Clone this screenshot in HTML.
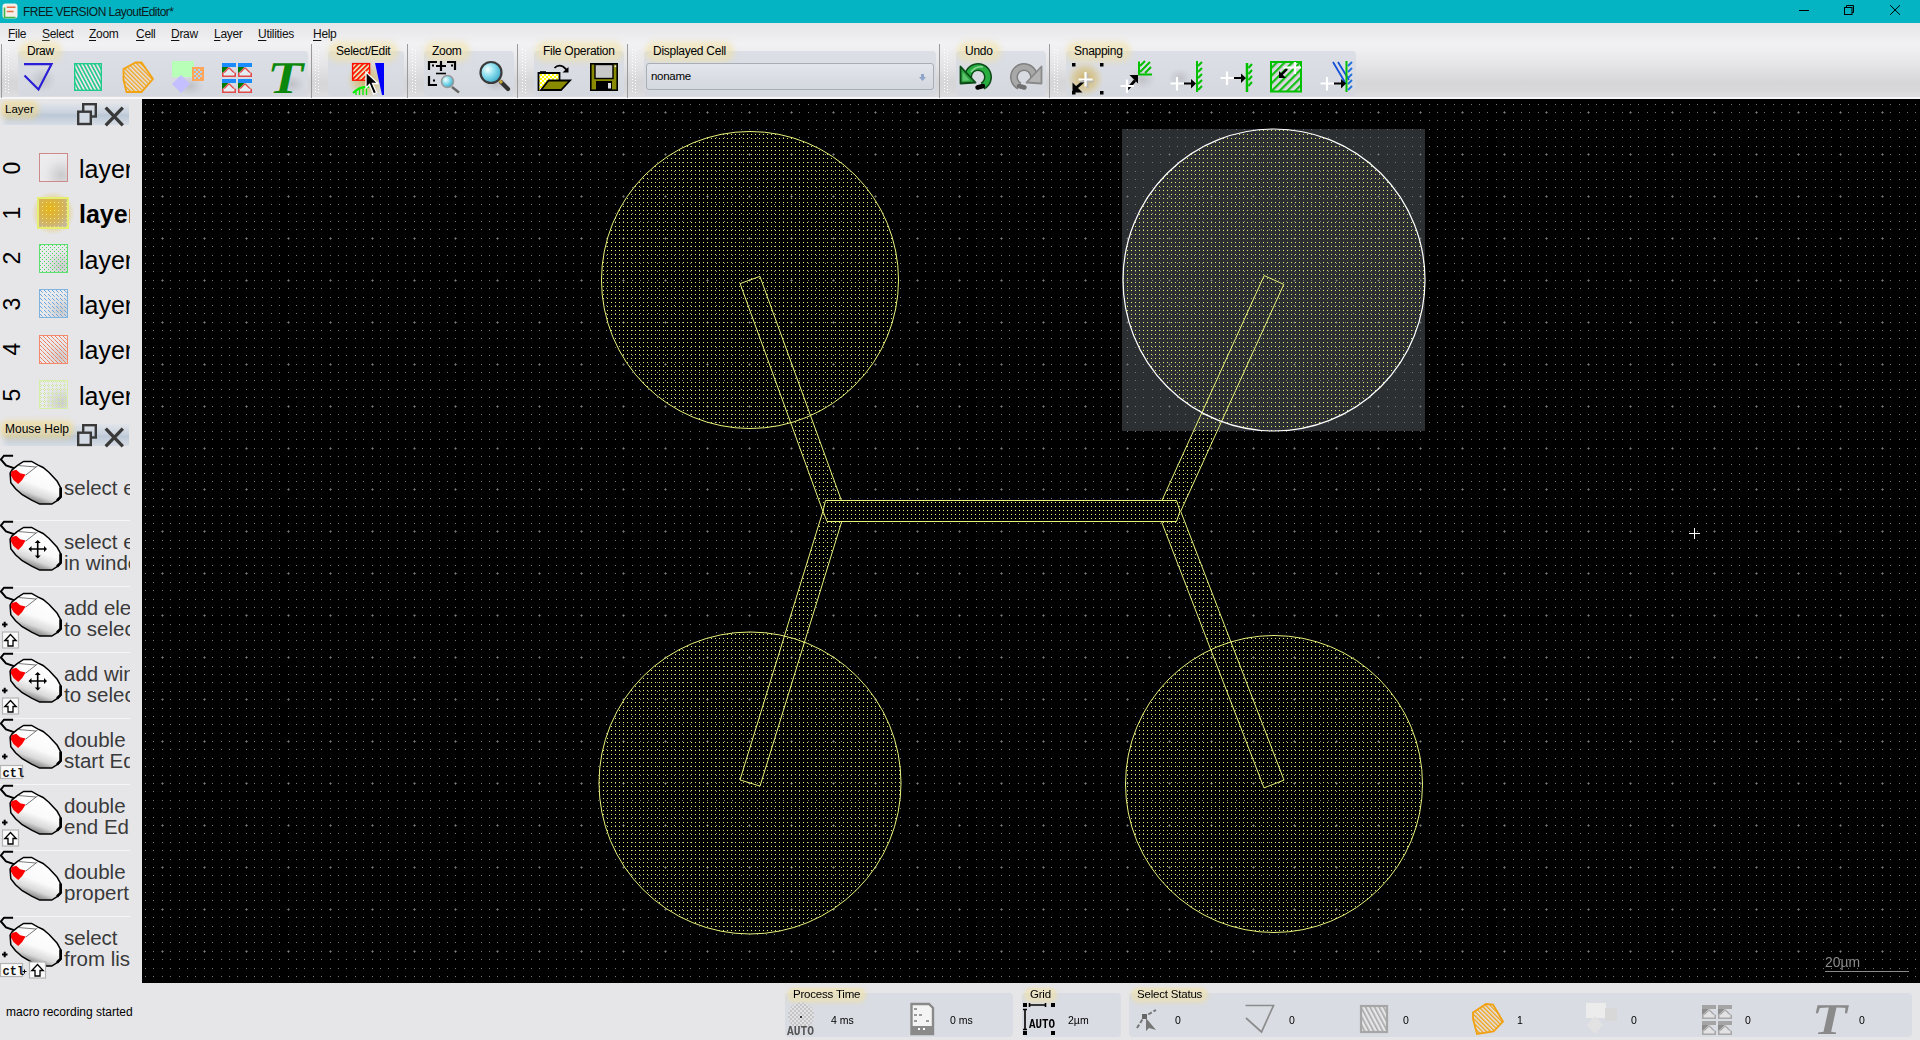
<!DOCTYPE html>
<html><head><meta charset="utf-8">
<style>
*{margin:0;padding:0;box-sizing:border-box}
html,body{width:1920px;height:1040px;overflow:hidden;background:#e6e6e9;font-family:"Liberation Sans",sans-serif;color:#000}
.a{position:absolute}
#title{left:0;top:0;width:1920px;height:23px;background:#04b4c3}
#title .t{left:23px;top:5px;font-size:12px;letter-spacing:-0.55px;color:#0b1a1c;white-space:nowrap}
#menu{left:0;top:23px;width:1920px;height:21px;background:linear-gradient(#e6e6e8,#eaeaec 40%,#f2f2f4 100%)}
#menu u{text-decoration:underline;text-underline-offset:2px;text-decoration-thickness:1px}
#menu span{position:absolute;top:4px;font-size:12px;letter-spacing:-0.3px;color:#111}
#tb{left:0;top:44px;width:1920px;height:54px;background:linear-gradient(#f2f2f4 0%,#ebebed 22%,#e3e3e5 45%,#d6d6d8 70%,#d8d8da 85%,#dfdfe1 100%)}
#tbline{left:0;top:97px;width:1920px;height:2px;background:#f6f6f8}
.grp{position:absolute;top:51px;height:45px;background:linear-gradient(#dcdfe5,#d5d8de);border-radius:4px}
.glab{position:absolute;top:43.9px;font-size:12px;letter-spacing:-0.27px;white-space:nowrap;color:#000;padding:0 5px 1px 5px;margin-left:-5px;line-height:14px;background:rgba(244,226,160,.5);border-radius:7px;box-shadow:0 0 5px 3px rgba(244,226,160,.5)}
.sep{position:absolute;top:44px;width:1px;height:54px;background:#9a9a9c}
.grip{position:absolute;top:49px;width:4px;height:45px;background-image:repeating-linear-gradient(#ffffff 0 1px,transparent 1px 3px),repeating-linear-gradient(#ffffff 0 1px,transparent 1px 3px);background-size:1px 100%,1px 100%;background-position:0 0,3px 1px;background-repeat:no-repeat}
#canvas{left:142px;top:99px;width:1778px;height:884px;background:radial-gradient(circle,#7a7a7a 0 0.7px,transparent 0.9px) 16.1px 9.3px/8.39px 8.388px,#000;overflow:hidden}
#left{left:0;top:99px;width:142px;height:884px;background:#e6e6e9}
#status{left:0;top:983px;width:1920px;height:57px;background:#e6e6e9}
.sgrp{position:absolute;top:993px;height:44px;background:#d9dce3;border-radius:4px}
.slab{position:absolute;top:987.8px;font-size:11.5px;letter-spacing:-0.2px;white-space:nowrap;color:#000;padding:0 5px 0 5px;margin-left:-5px;line-height:13px;background:rgba(244,226,160,.5);border-radius:6px;box-shadow:0 1px 4px 1px rgba(244,226,160,.5)}
.snum{position:absolute;top:1014.2px;font-size:10.5px;color:#000}

.dockt{background:linear-gradient(90deg,rgba(230,230,233,1) 0,rgba(230,230,233,0) 8px),linear-gradient(#e2e5ea 0%,#c9d2de 45%,#bcc8d7 55%,#d6dce4 100%)}
.docklab{font-size:11.5px;white-space:nowrap;padding:0 3px 1px 3px;margin-left:-3px;line-height:14px;background:rgba(244,214,120,.45);border-radius:6px;box-shadow:0 0 5px 2px rgba(244,214,120,.45)}
.lnum{position:absolute;left:0;width:24px;height:24px;font-size:23px;line-height:24px;text-align:center;transform:rotate(-90deg)}
.sw{position:absolute;left:39px;width:29px;height:29px;border:1px solid #c77;background:radial-gradient(circle at 75% 75%,#cdcdd0,#e9e9eb 70%)}
.ltxt{position:absolute;left:79px;width:51px;overflow:hidden;font-size:25px;line-height:30px;white-space:nowrap}
.mtxt{position:absolute;left:64px;width:66px;overflow:hidden;font-size:20.5px;line-height:21px;white-space:nowrap;color:#3a3a3a}
.msep{position:absolute;left:0;width:130px;height:1px;background:#f6f6f7}
</style></head><body>
<svg width="0" height="0" style="position:absolute">
 <defs>
  <linearGradient id="mshade" x1="0.7" y1="0.15" x2="0.35" y2="0.95"><stop offset="0" stop-color="#fff"/><stop offset="0.5" stop-color="#fafafa"/><stop offset="0.75" stop-color="#d8d8d8"/><stop offset="0.92" stop-color="#8a8a8a"/><stop offset="1" stop-color="#666"/></linearGradient>
  <radialGradient id="sgbase" cx=".78" cy=".78" r=".8"><stop offset="0" stop-color="#cacacd"/><stop offset=".7" stop-color="#e8e8ea"/><stop offset="1" stop-color="#ececee"/></radialGradient>
  <radialGradient id="sg1" cx=".4" cy=".35" r=".75"><stop offset="0" stop-color="#e8b418"/><stop offset=".6" stop-color="#d4b25a"/><stop offset="1" stop-color="#c4b8a0"/></radialGradient>
  <pattern id="sd1" patternUnits="userSpaceOnUse" width="4" height="4"><rect x="1" y="1" width="1" height="1" fill="#f4f06a"/></pattern>
  <pattern id="sd2" patternUnits="userSpaceOnUse" width="4" height="4"><rect x="1" y="1" width="1" height="1" fill="#4ed862"/><rect x="3" y="3" width="1" height="1" fill="#4ed862"/></pattern>
  <pattern id="sd3" patternUnits="userSpaceOnUse" width="4" height="4"><rect x="1" y="1" width="1" height="1" fill="#6aa6dc"/><rect x="2" y="2" width="1" height="1" fill="#6aa6dc"/><rect x="3" y="3" width="1" height="1" fill="#8abce6"/></pattern>
  <pattern id="sd4" patternUnits="userSpaceOnUse" width="4" height="4"><rect x="0" y="1" width="1" height="1" fill="#f08060"/><rect x="1" y="2" width="1" height="1" fill="#f08060"/><rect x="2" y="3" width="1" height="1" fill="#f08060"/><rect x="3" y="0" width="1" height="1" fill="#f4a088"/></pattern>
  <pattern id="sd5" patternUnits="userSpaceOnUse" width="4" height="4"><rect x="1" y="0" width="1" height="1" fill="#cfe8a0"/><rect x="0" y="1" width="1" height="1" fill="#cfe8a0"/><rect x="2" y="1" width="1" height="1" fill="#cfe8a0"/><rect x="1" y="2" width="1" height="1" fill="#cfe8a0"/></pattern>
  <g id="mouse">
   <path d="M13.1 1.7H4L0.9 5.4L6 11.4L15.5 14.6" fill="none" stroke="#000" stroke-width="2"/>
   <path d="M17.5 11.4L23.6 7.4H31.6L37.7 10.8L43.1 13.5L49.1 18.5L57.2 27.3L61.2 34.7V42.7L57.9 46.1L51.8 50.1H39.7L31.6 46.1L22.2 40.7L15.5 34.7L10.8 28.6L10.1 19.2L12.1 15.8Z" fill="url(#mshade)" stroke="#000" stroke-width="1.5"/>
   <path d="M60.5 33.5V43L57 46.5" fill="none" stroke="#000" stroke-width="2.5"/>
   <path d="M11.4 17.2L16.2 15.8L20.2 19.2L25.6 20.5L22.2 25.9L18.2 30L13.5 25.9L10.8 21.2Z" fill="#f00"/>
   <path d="M18 11.5L36 13M25.6 21.2L37.7 11.8" fill="none" stroke="#555" stroke-width="0.8"/>
  </g>
  <g id="plus"><path d="M2 38.5H7.5M4.7 35.8V41.2" stroke="#000" stroke-width="2"/></g>
  <g id="mcross">
   <path d="M29.5 29H46M37.7 21V37.5" stroke="#000" stroke-width="1.6"/>
   <path d="M28.5 29L31.5 26V32ZM47 29L44 26V32ZM37.7 20L34.7 23H40.7ZM37.7 38.5L34.7 35.5H40.7Z" fill="#000"/>
  </g>
  <g id="kshift">
   <rect x="2.5" y="46" width="16" height="16" fill="#fafafa" stroke="#b4b4b4" stroke-width="1.2"/>
   <path d="M10.5 48.5L4.8 54.5H8V60H13V54.5H16.2Z" fill="#fff" stroke="#000" stroke-width="1.3"/>
  </g>
  <g id="kctl">
   <rect x="0.5" y="47.5" width="22" height="13" fill="#fafafa" stroke="#b4b4b4" stroke-width="1.2"/>
   <text x="2.5" y="58.5" font-family="Liberation Mono" font-size="12" font-weight="bold" fill="#111">ctl</text>
  </g>
 </defs>
</svg>

<div id="title" class="a">
 <svg class="a" style="left:2px;top:3px" width="16" height="16" viewBox="0 0 16 16"><rect x="0.5" y="0.5" width="15" height="15" rx="3" fill="#f4efe9"/><path d="M2.5 4.5V14.5H13.5" stroke="#43b649" stroke-width="1.6" fill="none"/><path d="M4.8 4.2H13.5M4.8 8.5H11.5" stroke="#e96d45" stroke-width="1.6"/></svg>
 <div class="a t">FREE VERSION LayoutEditor*</div>
 <svg class="a" style="left:1790px;top:0" width="130" height="22">
  <path d="M9 10.5H19" stroke="#000" stroke-width="1"/>
  <rect x="54.5" y="7.5" width="7.5" height="7" fill="none" stroke="#000"/><path d="M56.5 7.5V5.5H63.5V12.5H62" fill="none" stroke="#000"/>
  <path d="M100.2 5.2L110 14.8M110 5.2L100.2 14.8" stroke="#000" stroke-width="1"/>
 </svg>
</div>
<div id="menu" class="a">
 <span style="left:8px"><u>F</u>ile</span><span style="left:42px"><u>S</u>elect</span><span style="left:89px"><u>Z</u>oom</span><span style="left:136px"><u>C</u>ell</span><span style="left:171px"><u>D</u>raw</span><span style="left:214px"><u>L</u>ayer</span><span style="left:258px"><u>U</u>tilities</span><span style="left:313px"><u>H</u>elp</span>
</div>
<div id="tb" class="a"></div>
<div id="tbline" class="a"></div>
<!-- toolbar groups -->
<div class="sep" style="left:1px"></div><div class="grip" style="left:5px"></div>
<div class="grp" style="left:18px;width:290px"></div><div class="glab" style="left:27px">Draw</div>
<div class="sep" style="left:311px"></div><div class="grip" style="left:315px"></div>
<div class="grp" style="left:328px;width:76px"></div><div class="glab" style="left:336px">Select/Edit</div>
<div class="sep" style="left:407px"></div><div class="grip" style="left:412px"></div>
<div class="grp" style="left:424px;width:90px"></div><div class="glab" style="left:432px">Zoom</div>
<div class="sep" style="left:517px"></div><div class="grip" style="left:522px"></div>
<div class="grp" style="left:534px;width:90px"></div><div class="glab" style="left:543px">File Operation</div>
<div class="sep" style="left:627px"></div><div class="grip" style="left:632px"></div>
<div class="grp" style="left:644px;width:292px"></div><div class="glab" style="left:653px">Displayed Cell</div>
<div class="sep" style="left:939px"></div><div class="grip" style="left:944px"></div>
<div class="grp" style="left:956px;width:90px"></div><div class="glab" style="left:965px">Undo</div>
<div class="sep" style="left:1049px"></div><div class="grip" style="left:1054px"></div>
<div class="grp" style="left:1066px;width:290px"></div><div class="glab" style="left:1074px">Snapping</div>

<svg class="a" style="left:0;top:0" width="1920" height="99" id="tbicons">
 <defs>
  <pattern id="hatchG" patternUnits="userSpaceOnUse" width="3.3" height="4" patternTransform="rotate(-28)"><rect width="4" height="4" fill="#f4e2ec"/><rect width="1.6" height="4" fill="#1fcc8c"/></pattern>
  <pattern id="hatchO" patternUnits="userSpaceOnUse" width="3" height="4" patternTransform="rotate(-45)"><rect width="4" height="4" fill="#e2e4ee"/><rect width="1.4" height="4" fill="#f1a216"/></pattern>
  <pattern id="hatchR" patternUnits="userSpaceOnUse" width="3.5" height="4" patternTransform="rotate(45)"><rect width="4" height="4" fill="#e6e2b8"/><rect width="1.8" height="4" fill="#ff1a00"/></pattern>
  <pattern id="hatchS" patternUnits="userSpaceOnUse" width="5.5" height="6" patternTransform="rotate(45)"><rect width="6" height="6" fill="#dcd6e0"/><rect width="2.2" height="6" fill="#10c010"/></pattern>
  <pattern id="checkY" patternUnits="userSpaceOnUse" width="4" height="4"><rect width="4" height="4" fill="#ffff00"/><rect width="2" height="2" fill="#fff"/><rect x="2" y="2" width="2" height="2" fill="#fff"/></pattern>
  <radialGradient id="glowG"><stop offset="0" stop-color="#c9a84a" stop-opacity=".85"/><stop offset=".6" stop-color="#d8c07a" stop-opacity=".55"/><stop offset="1" stop-color="#e0d0a0" stop-opacity="0"/></radialGradient>
  <radialGradient id="shadowG"><stop offset="0" stop-color="#8a8a90" stop-opacity=".32"/><stop offset="1" stop-color="#9a9aa0" stop-opacity="0"/></radialGradient>
  <radialGradient id="glassG" cx=".35" cy=".35" r=".7"><stop offset="0" stop-color="#f4ffff"/><stop offset=".45" stop-color="#8fe0f0"/><stop offset="1" stop-color="#3aa8c8"/></radialGradient>
  <g id="arr1"><rect x="0" y="0" width="14" height="4" fill="#1a8cff"/><path d="M0 4H6.5L0 10.5Z" fill="#007a00"/><path d="M7 4.8L12.8 10.5H1.2Z" fill="#e4eef2"/><path d="M7 4.8L1.5 10.3M7 4.8L12.5 10.3" stroke="#e34a4a" stroke-width="1.3" fill="none"/><path d="M0.8 9.8V13.2H13.2V9.8" stroke="#e34a4a" stroke-width="1.6" fill="#e4eef2"/></g>
 </defs>
 <!-- Draw group -->
 <ellipse cx="42" cy="80" rx="14" ry="13" fill="url(#shadowG)"/>
 <path d="M24 64.2H51.5L38.5 89.5L24.5 75.5" fill="none" stroke="#2a1ed6" stroke-width="2.2"/>
 <rect x="74.7" y="63.7" width="26.6" height="26.6" fill="url(#hatchG)" stroke="#1fcc8c" stroke-width="1.4"/>
 <polygon points="123.5,69 135.5,62.5 141.5,62.5 153,79 141.5,92 126.5,92 123.5,80" fill="url(#hatchO)" stroke="#f2a312" stroke-width="1.8"/>
 <ellipse cx="190" cy="86" rx="14" ry="10" fill="url(#shadowG)"/>
 <rect x="172" y="61" width="22" height="16" fill="#b8ffb8"/>
 <polygon points="181,75 190,84 181,93 172,84" fill="#c4c0ff"/>
 <rect x="192" y="67" width="12" height="14" fill="#ffa65a"/>
 <path d="M194 70h2M198 70h2M196 72h2M200 72h2M194 74h2M198 74h2M196 76h2M200 76h2M194 78h2M198 78h2" stroke="#b0d4f0" stroke-width="2"/>
 <use href="#arr1" x="222" y="63"/><use href="#arr1" x="238" y="63"/><use href="#arr1" x="222" y="79"/><use href="#arr1" x="238" y="79"/>
 <ellipse cx="292" cy="84" rx="13" ry="10" fill="url(#shadowG)"/>
 <text x="0" y="0" transform="translate(266,93) scale(1.1,1) skewX(-11)" font-family="Liberation Serif" font-weight="bold" font-size="45.5" fill="#0b880b">T</text>
 <!-- Select/Edit -->
 <ellipse cx="366" cy="80" rx="20" ry="19" fill="url(#glowG)"/>
 <rect x="352.6" y="63.6" width="17" height="16.6" fill="url(#hatchR)" stroke="#ff1000" stroke-width="1.4"/>
 <polygon points="375,63 384,63 384,95 382,95" fill="#0000ff"/>
 <path d="M353 93Q360 86 369 87" fill="none" stroke="#00f000" stroke-width="2"/>
 <path d="M356 90V95M359.5 88.5V95M363 87.5V95M366.5 87.5V95" stroke="#00f000" stroke-width="1.3"/>
 <path d="M366 72V88L369.5 84.5L373.5 94L376.5 92.5L372.5 83.5H378Z" fill="#000" stroke="#fff" stroke-width="1.3"/>
 <!-- Zoom -->
 <path d="M429 70V62H437M455 70V62H447M429 76V85H437" fill="none" stroke="#000" stroke-width="2.2"/>
 <path d="M432 65.5h2M451 65.5h2M433 80.5h2" stroke="#000" stroke-width="2"/>
 <path d="M436 66H446M441 61V71" stroke="#000" stroke-width="2.2"/>
 <path d="M436 73.5H446" stroke="#000" stroke-width="1.6"/>
 <line x1="452" y1="87" x2="459" y2="92.5" stroke="#666" stroke-width="2.4"/>
 <circle cx="447.5" cy="81.5" r="6" fill="url(#glassG)" stroke="#9a9a9a" stroke-width="1.6"/>
 <ellipse cx="496" cy="84" rx="13" ry="8" fill="url(#shadowG)"/>
 <line x1="501" y1="82" x2="508" y2="89" stroke="#333" stroke-width="4.2" stroke-linecap="round"/>
 <line x1="499.5" y1="80.5" x2="502" y2="83" stroke="#c8a838" stroke-width="3"/>
 <circle cx="491" cy="72.5" r="10.5" fill="url(#glassG)" stroke="#3a3a3a" stroke-width="2.2"/>
 <!-- File op -->
 <path d="M540 72H546" stroke="#000" stroke-width="1.6"/>
 <path d="M538.5 91V73H559.5V80" fill="url(#checkY)" stroke="#000" stroke-width="1.8"/>
 <polygon points="541,90 548.5,80.5 570,80.5 561,90" fill="#8a8a00" stroke="#000" stroke-width="1.8"/>
 <path d="M554.5 68Q558 64 563 66.5L567.5 70.5" fill="none" stroke="#000" stroke-width="1.7"/>
 <path d="M562.5 72.5H568.5V67Z" fill="#000"/>
 <rect x="590.8" y="63.8" width="26.4" height="26.4" fill="#8a8a00" stroke="#000" stroke-width="1.6"/>
 <rect x="595" y="64.5" width="18" height="14" fill="#c8c8c8" stroke="#000" stroke-width="1.4"/>
 <rect x="596" y="81" width="16" height="9" fill="#000"/>
 <rect x="608" y="83" width="3" height="5.5" fill="#ddd"/>
 <rect x="614.5" y="65.5" width="1.6" height="1.6" fill="#eee"/>
 <!-- Undo/Redo -->
 <path d="M968.3 79.5A10 10 0 1 1 982.5 86" fill="none" stroke="#0d4d1a" stroke-width="8"/>
 <path d="M968.3 79.5A10 10 0 1 1 982.5 86" fill="none" stroke="#27ad40" stroke-width="5"/>
 <path d="M971 72Q976 66 983 67" fill="none" stroke="#8fd89a" stroke-width="1.5"/>
 <polygon points="960.5,66.5 960.5,83.5 975.5,82.5" fill="#2a9e3c" stroke="#0b4a17" stroke-width="1.8" stroke-linejoin="round"/>
 <path d="M962.5 72L962.5 81L970 80.5Z" fill="#5cc46c"/>
 <path d="M977.5 87.5L983 86" stroke="#000" stroke-width="4.5" stroke-linecap="round"/>
 <path d="M1033.7 79.5A10 10 0 1 0 1019.5 86" fill="none" stroke="#808080" stroke-width="8"/>
 <path d="M1033.7 79.5A10 10 0 1 0 1019.5 86" fill="none" stroke="#a8a8a8" stroke-width="5"/>
 <polygon points="1041.5,66.5 1041.5,83.5 1026.5,82.5" fill="#b4b4b4" stroke="#8a8a8a" stroke-width="1.8" stroke-linejoin="round"/>
 <path d="M1024.5 87.5L1019 86" stroke="#707070" stroke-width="4.5" stroke-linecap="round"/>
 <!-- Snapping -->
 <ellipse cx="1085" cy="79" rx="19" ry="18" fill="url(#glowG)"/>
 <rect x="1072" y="63" width="3.5" height="3.5" fill="#000"/><rect x="1100" y="63" width="3.5" height="3.5" fill="#000"/>
 <rect x="1072" y="91" width="3.5" height="3.5" fill="#000"/><rect x="1100" y="91" width="3.5" height="3.5" fill="#000"/>
 <path d="M1076 88L1084.5 80.5" stroke="#000" stroke-width="2.8"/><path d="M1072.5 92.5V82.5L1082.5 92.5Z" fill="#000"/>
 <path d="M1079.5 81.5H1093.5M1087.5 74V88" stroke="#b8b8b8" stroke-width="2"/><path d="M1078.5 79.5H1092.5M1085.5 72V86.5" stroke="#fff" stroke-width="2.2"/>
 <ellipse cx="1142" cy="79" rx="14" ry="11" fill="url(#shadowG)"/>
 <path d="M1138 80V70.5H1148" fill="none" stroke="#00c000" stroke-width="0"/>
 <path d="M1139 61.5V74.5H1152M1140 66L1145 61M1140 72L1150 62M1145 73L1151 67" fill="none" stroke="#00c000" stroke-width="2"/>
 <path d="M1127.5 89L1135 80.5" stroke="#000" stroke-width="2.8"/><path d="M1138 75V83.5L1129.5 75Z" fill="#000"/>
 <path d="M1120.5 86H1134M1127 79.5V93" stroke="#fff" stroke-width="2.2"/>
 <ellipse cx="1180" cy="78" rx="12" ry="10" fill="url(#shadowG)"/>
 <path d="M1197 61V92" stroke="#00c000" stroke-width="2"/><path d="M1198 66L1202 62M1198 72L1202 68M1198 78L1202 74M1198 84L1202 80M1198 90L1202 86" stroke="#00c000" stroke-width="2"/>
 <path d="M1184 83.5H1192" stroke="#000" stroke-width="2"/><path d="M1191 79L1196 83.5L1191 88.5Z" fill="#000"/>
 <path d="M1170.5 83.5H1184M1177 77V90.5" stroke="#fff" stroke-width="2.2"/>
 <path d="M1247 63V92" stroke="#00c000" stroke-width="2.5"/><path d="M1248.5 68L1252 64M1248.5 74L1252 70M1248.5 80L1252 76M1248.5 86L1252 82" stroke="#00c000" stroke-width="2"/>
 <path d="M1234 78H1242" stroke="#000" stroke-width="2"/><path d="M1241 73.5L1246 78L1241 83Z" fill="#000"/>
 <path d="M1220.5 78H1234M1227 71.5V85" stroke="#fff" stroke-width="2.2"/>
 <rect x="1271" y="62" width="30" height="29.5" fill="url(#hatchS)" stroke="#00c000" stroke-width="2"/>
 <path d="M1287 69L1281 75" stroke="#000" stroke-width="2.4"/><path d="M1279 71V78H1286Z" fill="#000"/>
 <path d="M1283.5 67.5H1301M1295 62V74" stroke="#fff" stroke-width="2.2"/>
 <path d="M1333 62L1346 84M1338 62L1349 80" stroke="#1450d8" stroke-width="1.8"/>
 <path d="M1346.5 61V92" stroke="#00c000" stroke-width="2"/><path d="M1348 66L1352 62M1348 72L1352 68M1348 78L1352 74M1348 84L1352 80M1348 90L1352 86" stroke="#2070e0" stroke-width="1.8"/>
 <path d="M1334 83.5H1342" stroke="#000" stroke-width="2"/><path d="M1341 79L1346 83.5L1341 88.5Z" fill="#000"/>
 <path d="M1320.5 83.5H1334M1327 77V90.5" stroke="#fff" stroke-width="2.2"/>
</svg>
<div class="a" style="left:646px;top:63px;width:288px;height:27px;border:1px solid #a9adb6;border-radius:3px;background:linear-gradient(#e3e6ec,#d3d7de)"></div>
<svg class="a" style="left:915px;top:70px" width="14" height="14"><path d="M6 4h3v3h2l-3.5 4-3.5-4h2z" fill="#8ea4c8"/></svg>
<div class="a" style="left:651px;top:70.3px;font-size:11.5px;letter-spacing:-0.3px">noname</div>

<div id="canvas" class="a"><canvas id="cv" width="1778" height="884" style="position:absolute;left:0;top:0"></canvas></div>

<div class="a" style="left:1122px;top:129px;width:303px;height:302px;background:#2b2f31;mix-blend-mode:lighten"></div>
<div id="leftpanel" class="a" style="left:0;top:99px;width:142px;height:884px;overflow:hidden">
 <!-- Layer dock title -->
 <div class="a dockt" style="left:0;top:4px;width:129px;height:22px"></div>
 <div class="a docklab" style="left:5px;top:2.5px">Layer</div>
 <svg class="a" style="left:74px;top:3px" width="56" height="26">
  <rect x="9.2" y="2.2" width="12.6" height="12.3" fill="none" stroke="#393939" stroke-width="2.4"/>
  <rect x="4.2" y="9.7" width="12.6" height="12.3" fill="#d5dbe4" stroke="#393939" stroke-width="2.4"/>
  <path d="M31.7 5.7L48.8 23.3M48.8 5.7L31.7 23.3" stroke="#393939" stroke-width="3.3"/>
 </svg>
 <!-- layers -->
 <div id="layers"><svg class="a" style="left:39px;top:54.0px" width="29" height="29"><rect x="0.5" y="0.5" width="28" height="28" fill="url(#sgbase)" stroke="#cc8a8a" stroke-width="1"/></svg>
<div class="lnum" style="top:56.5px">0</div>
<div class="ltxt" style="top:54.8px;">layer 00</div>
<div class="a" style="left:31px;top:91.9px;width:44px;height:44px;border-radius:50%;background:radial-gradient(circle,rgba(225,180,40,.75) 0,rgba(228,190,70,.45) 45%,rgba(230,200,120,0) 70%)"></div>
<svg class="a" style="left:37px;top:97.9px" width="32" height="32"><rect x="1" y="1" width="30" height="30" fill="url(#sg1)" stroke="#e6ee72" stroke-width="2"/><rect x="2" y="2" width="28" height="28" fill="url(#sd1)"/></svg>
<div class="lnum" style="top:101.9px">1</div>
<div class="ltxt" style="top:100.2px;font-weight:bold">layer 01</div>
<svg class="a" style="left:39px;top:144.8px" width="29" height="29"><rect x="0.5" y="0.5" width="28" height="28" fill="url(#sgbase)" stroke="#5ee070" stroke-width="1"/><rect x="1" y="1" width="27" height="27" fill="url(#sd2)"/></svg>
<div class="lnum" style="top:147.3px">2</div>
<div class="ltxt" style="top:145.6px;">layer 02</div>
<svg class="a" style="left:39px;top:190.2px" width="29" height="29"><rect x="0.5" y="0.5" width="28" height="28" fill="url(#sgbase)" stroke="#7fb2dc" stroke-width="1"/><rect x="1" y="1" width="27" height="27" fill="url(#sd3)"/></svg>
<div class="lnum" style="top:192.7px">3</div>
<div class="ltxt" style="top:191.0px;">layer 03</div>
<svg class="a" style="left:39px;top:235.6px" width="29" height="29"><rect x="0.5" y="0.5" width="28" height="28" fill="url(#sgbase)" stroke="#f4886a" stroke-width="1"/><rect x="1" y="1" width="27" height="27" fill="url(#sd4)"/></svg>
<div class="lnum" style="top:238.1px">4</div>
<div class="ltxt" style="top:236.4px;">layer 04</div>
<svg class="a" style="left:39px;top:281.0px" width="29" height="29"><rect x="0.5" y="0.5" width="28" height="28" fill="url(#sgbase)" stroke="#d6eea6" stroke-width="1"/><rect x="1" y="1" width="27" height="27" fill="url(#sd5)"/></svg>
<div class="lnum" style="top:283.5px">5</div>
<div class="ltxt" style="top:281.8px;">layer 05</div></div><!--/layers-->
 <!-- Mouse help title -->
 <div class="a dockt" style="left:0;top:325px;width:129px;height:22px"></div>
 <div class="a docklab" style="left:5px;top:323.4px;font-size:12px">Mouse Help</div>
 <svg class="a" style="left:74px;top:324px" width="56" height="26">
  <rect x="9.2" y="2.2" width="12.6" height="12.3" fill="none" stroke="#393939" stroke-width="2.4"/>
  <rect x="4.2" y="9.7" width="12.6" height="12.3" fill="#d5dbe4" stroke="#393939" stroke-width="2.4"/>
  <path d="M31.7 5.7L48.8 23.3M48.8 5.7L31.7 23.3" stroke="#393939" stroke-width="3.3"/>
 </svg>
 <div id="mice"><svg class="a" style="left:0;top:355px" width="64" height="66"><use href="#mouse"/></svg>
<div class="mtxt" style="top:377.9px">select element</div>
<div class="msep" style="top:421px"></div>
<svg class="a" style="left:0;top:421px" width="64" height="66"><use href="#mouse"/><use href="#mcross"/></svg>
<div class="mtxt" style="top:432.4px">select elements<br>in window</div>
<div class="msep" style="top:487px"></div>
<svg class="a" style="left:0;top:487px" width="64" height="66"><use href="#mouse"/><use href="#plus"/><use href="#kshift"/></svg>
<div class="mtxt" style="top:498.4px">add element<br>to selection</div>
<div class="msep" style="top:553px"></div>
<svg class="a" style="left:0;top:553px" width="64" height="66"><use href="#mouse"/><use href="#mcross"/><use href="#plus"/><use href="#kshift"/></svg>
<div class="mtxt" style="top:564.4px">add window<br>to selection</div>
<div class="msep" style="top:619px"></div>
<svg class="a" style="left:0;top:619px" width="64" height="66"><use href="#mouse"/><use href="#plus"/><use href="#kctl"/></svg>
<div class="mtxt" style="top:630.4px">double click<br>start Edit</div>
<div class="msep" style="top:685px"></div>
<svg class="a" style="left:0;top:685px" width="64" height="66"><use href="#mouse"/><use href="#plus"/><use href="#kshift"/></svg>
<div class="mtxt" style="top:696.4px">double click<br>end Edit</div>
<div class="msep" style="top:751px"></div>
<svg class="a" style="left:0;top:751px" width="64" height="66"><use href="#mouse"/></svg>
<div class="mtxt" style="top:762.4px">double click<br>properties</div>
<div class="msep" style="top:817px"></div>
<svg class="a" style="left:0;top:817px" width="64" height="66"><use href="#mouse"/><use href="#plus"/><use href="#kctl"/><use href="#kshift" x="27"/><path d="M22.5 55.5h4M24.5 53.5v4" stroke="#000"/></svg>
<div class="mtxt" style="top:828.4px">select<br>from list</div></div><!--/mice-->
</div>

<div id="status" class="a"></div>
<div class="a" style="left:6px;top:1005.4px;font-size:12px">macro recording started</div>
<div class="sgrp" style="left:785px;width:228px"></div><div class="slab" style="left:793px">Process Time</div>
<div class="sgrp" style="left:1022px;width:99px"></div><div class="slab" style="left:1030px">Grid</div>
<div class="sgrp" style="left:1129px;width:783px"></div><div class="slab" style="left:1137px">Select Status</div>

<svg class="a" style="left:0;top:983px" width="1920" height="57" id="sticons">
 <defs>
  <pattern id="chkG" patternUnits="userSpaceOnUse" width="4" height="4"><rect width="4" height="4" fill="#e2e2e4"/><rect width="2" height="2" fill="#c4c4c7"/><rect x="2" y="2" width="2" height="2" fill="#c4c4c7"/></pattern>
  <pattern id="hatchGray" patternUnits="userSpaceOnUse" width="4" height="4" patternTransform="rotate(-28)"><rect width="4" height="4" fill="#e6e6e8"/><rect width="1.6" height="4" fill="#a8a8a8"/></pattern>
  <pattern id="hatchOr" patternUnits="userSpaceOnUse" width="3" height="4" patternTransform="rotate(-45)"><rect width="4" height="4" fill="#e2e4ee"/><rect width="1.4" height="4" fill="#f0a010"/></pattern>
  <g id="arrG"><rect x="0" y="0" width="14" height="4" fill="#a4a4a4"/><path d="M0 4H6.5L0 10.5Z" fill="#8c8c8c"/><path d="M7 4.8L12.8 10.5H1.2Z" fill="#e2e2e4"/><path d="M7 4.8L1.5 10.3M7 4.8L12.5 10.3" stroke="#a8a8a8" stroke-width="1.3" fill="none"/><path d="M0.8 9.8V13.2H13.2V9.8" stroke="#a8a8a8" stroke-width="1.6" fill="#e2e2e4"/></g>
 </defs>
 <g transform="translate(0,-983)">
  <circle cx="801" cy="1015.5" r="13" fill="url(#chkG)"/>
  <rect x="800" y="1016" width="2" height="2" fill="#333"/>
  <text x="787" y="1035" font-family="Liberation Mono" font-weight="bold" font-size="13" fill="#555" textLength="27" lengthAdjust="spacingAndGlyphs">AUTO</text>
  <path d="M911.5 1004H929L933 1008V1034H911.5Z" fill="#f4f4f4" stroke="#8a8a8a" stroke-width="2.4"/>
  <rect x="911" y="1026" width="22" height="8" fill="#8a8a8a"/>
  <rect x="918" y="1028" width="2" height="2" fill="#fff"/><rect x="923" y="1028" width="2" height="2" fill="#fff"/>
  <path d="M914 1009h3M914 1015h3M919 1015h3M914 1021h3M926 1021h3" stroke="#9a9a9a" stroke-width="2"/>
  <rect x="1023" y="1003" width="4" height="4" fill="#000"/><rect x="1051" y="1003" width="4" height="4" fill="#000"/>
  <rect x="1023" y="1031" width="4" height="4" fill="#000"/><rect x="1051" y="1031" width="4" height="4" fill="#000"/>
  <path d="M1030 1005H1046M1025 1010V1029" stroke="#000" stroke-width="1.6"/>
  <path d="M1029.5 1003V1007M1045.5 1003V1007M1023 1009.5H1027M1023 1029.5H1027" stroke="#000" stroke-width="1.6"/>
  <text x="1029" y="1028" font-family="Liberation Mono" font-weight="bold" font-size="13" fill="#000" textLength="26" lengthAdjust="spacingAndGlyphs">AUTO</text>
  <path d="M1137 1028L1144 1017L1156 1010" fill="none" stroke="#777" stroke-width="2" stroke-dasharray="4 2"/>
  <rect x="1142" y="1014" width="5" height="5" fill="#666"/>
  <path d="M1146 1018V1031L1149 1028L1156 1030Z" fill="#777"/>
  <path d="M1245.5 1005.5H1273.5L1261.5 1032L1246 1018" fill="none" stroke="#8c8c8c" stroke-width="1.7"/>
  <rect x="1361" y="1006" width="26" height="26" fill="url(#hatchGray)" stroke="#a6a6a6" stroke-width="2.2"/>
  <polygon points="1473,1012.5 1486,1004 1493,1004.5 1503,1021.5 1493.5,1031.5 1477,1034 1473,1019" fill="url(#hatchOr)" stroke="#f0a010" stroke-width="1.8"/>
  <rect x="1586" y="1003" width="20" height="15" fill="#ececec"/><polygon points="1595,1016 1603,1025 1595,1034 1587,1025" fill="#e2e2e2"/><rect x="1605" y="1008" width="12" height="13" fill="#d8d8d8"/>
  <use href="#arrG" x="1702" y="1005"/><use href="#arrG" x="1718" y="1005"/><use href="#arrG" x="1702" y="1021"/><use href="#arrG" x="1718" y="1021"/>
  <text x="0" y="0" transform="translate(1810.5,1034) scale(1.12,1) skewX(-11)" font-family="Liberation Serif" font-weight="bold" font-size="44" fill="#8a8a8a">T</text>
 </g>
</svg>
<div class="snum" style="left:831px">4 ms</div><div class="snum" style="left:950px">0 ms</div><div class="snum" style="left:1068px">2µm</div>
<div class="snum" style="left:1175px">0</div><div class="snum" style="left:1289px">0</div><div class="snum" style="left:1403px">0</div><div class="snum" style="left:1517px">1</div><div class="snum" style="left:1631px">0</div><div class="snum" style="left:1745px">0</div><div class="snum" style="left:1859px">0</div>

<svg class="a" style="left:0;top:0" width="1920" height="1040" id="shapes">
 <defs>
  <pattern id="dots" patternUnits="userSpaceOnUse" x="3" y="2" width="4" height="4"><rect x="0" y="0" width="1" height="1" fill="#e6ee78"/></pattern>
  <pattern id="dotsSel" patternUnits="userSpaceOnUse" x="3" y="2" width="4" height="4"><rect x="0" y="0" width="1" height="1" fill="#eef0b0"/></pattern>
  <clipPath id="cvclip"><rect x="142" y="99" width="1778" height="884"/></clipPath>
 </defs>
 <g clip-path="url(#cvclip)">
  <polygon points="740.1,283.6 822.9,511.3 740.0,779.9 760.0,786.1 845.1,510.7 759.9,276.4" fill="url(#dots)" stroke="#e8f07a" stroke-width="1"/>
  <polygon points="1264.2,275.6 1157.3,510.7 1264.0,787.9 1284.0,780.1 1180.7,511.3 1283.8,284.4" fill="url(#dots)" stroke="#e8f07a" stroke-width="1"/>
  <polygon points="825.5,500.5 1176.5,500.5 1180,511 1176.5,521.5 827,521.5 823,511" fill="#000"/>
  <polygon points="825.5,500.5 1176.5,500.5 1180,511 1176.5,521.5 827,521.5 823,511" fill="url(#dots)" stroke="#e8f07a" stroke-width="1"/>
  <path d="M1689 533.5H1700M1694.5 528V539" stroke="#fff" stroke-width="1"/>
  <path d="M1825 971.5H1909" stroke="#8a8a8a" stroke-width="1"/>
  <text x="1825" y="967" font-family="Liberation Sans" font-size="15" fill="#8c8c8c" textLength="35" lengthAdjust="spacingAndGlyphs">20µm</text>
  <circle cx="750" cy="280" r="148.5" fill="url(#dots)" stroke="#e8f07a" stroke-width="1"/>
  <circle cx="1274" cy="280" r="151" fill="url(#dots)" stroke="#ffffff" stroke-width="1.2"/>
  <circle cx="750" cy="783" r="151" fill="url(#dots)" stroke="#e8f07a" stroke-width="1"/>
  <circle cx="1274" cy="784" r="148.5" fill="url(#dots)" stroke="#e8f07a" stroke-width="1"/>
 </g>
</svg>
<script>
(function(){
 var c=document.getElementById('cv'),x=c.getContext('2d');
 document.getElementById('canvas').style.background='#000';
 var ox=162.3-142, oy=112.5-99, s=8.39, sy=8.388;
 x.fillStyle='#767676';
 for(var i=-3;i<220;i++){var px=Math.floor(ox+i*s);if(px<0||px>=1778)continue;
  for(var j=-3;j<110;j++){var py=Math.floor(oy+j*sy);if(py<0||py>=884)continue;
   if(((i%5)+5)%5==0&&((j%5)+5)%5==0){x.fillStyle='#808080';x.fillRect(px,py,1,1);x.fillStyle='#505050';x.fillRect(px-1,py,1,1);x.fillRect(px+1,py,1,1);x.fillRect(px,py-1,1,1);x.fillRect(px,py+1,1,1);x.fillStyle='#767676';}
   else x.fillRect(px,py,1,1);
  }}
})();
</script>
</body></html>
